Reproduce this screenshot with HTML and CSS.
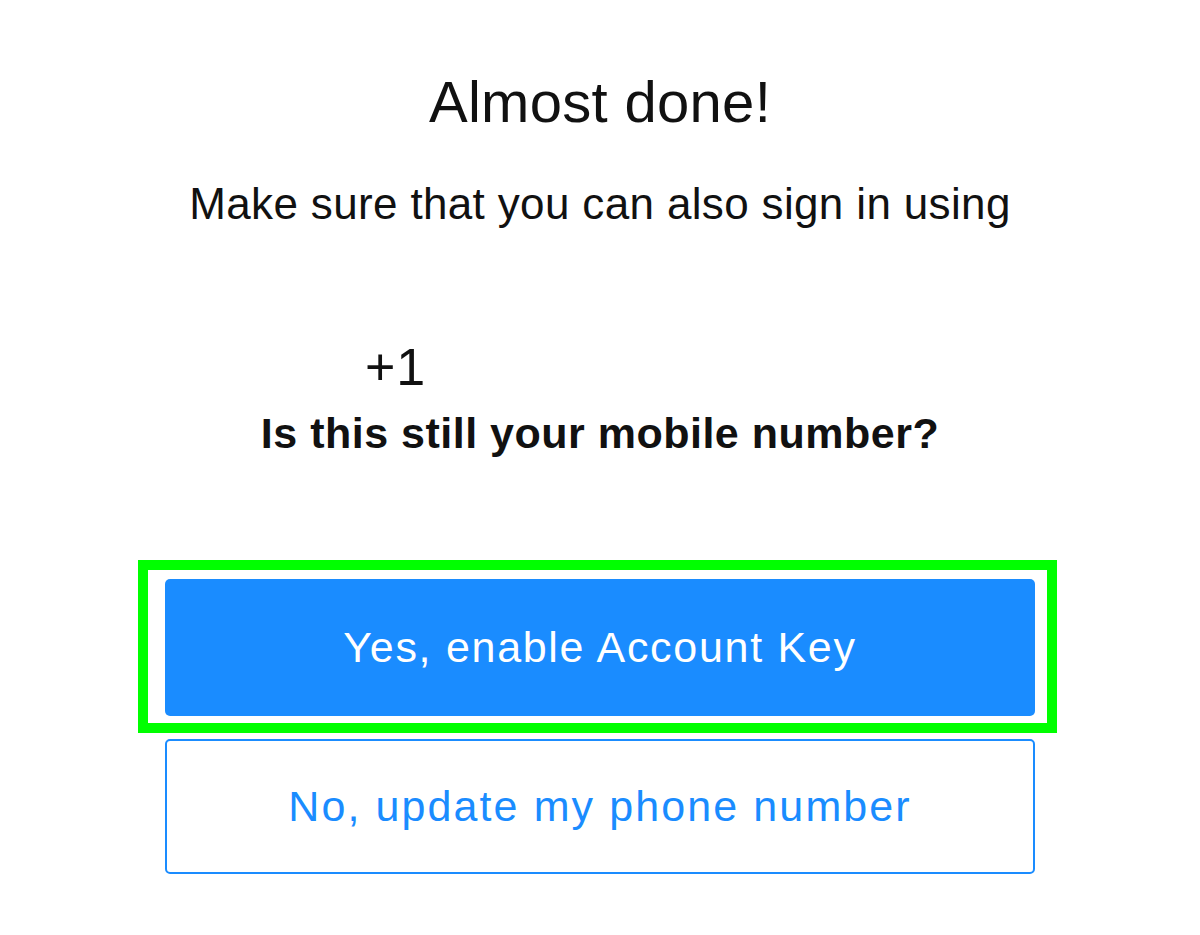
FILE: index.html
```html
<!DOCTYPE html>
<html lang="en">
<head>
<meta charset="utf-8">
<title>Almost done!</title>
<link rel="stylesheet" href="styles.css">
</head>
<body>
<main class="page">
  <h1 class="title">Almost done!</h1>
  <p class="lead">Make sure that you can also sign in using</p>
  <div class="phone">+1</div>
  <p class="question">Is this still your mobile number?</p>
  <div class="actions">
    <div class="highlight-wrap">
      <button class="btn btn-primary" type="button">Yes, enable Account Key</button>
      <span class="highlight" aria-hidden="true"></span>
    </div>
    <button class="btn btn-secondary" type="button">No, update my phone number</button>
  </div>
</main>
</body>
</html>
```

FILE: styles.css
```css
html, body {
  margin: 0;
  padding: 0;
  background: #ffffff;
}

body {
  font-family: "Liberation Sans", Arial, Helvetica, sans-serif;
  color: #111111;
}

.page {
  width: 870px;
  margin: 0 auto;
  padding-top: 67px;
  display: flex;
  flex-direction: column;
}

.title {
  margin: 0;
  font-size: 58px;
  line-height: 70px;
  font-weight: 400;
  text-align: center;
  letter-spacing: 0.3px;
}

.lead {
  margin: 40px 0 0;
  font-size: 44px;
  line-height: 54px;
  text-align: center;
  letter-spacing: 0.35px;
}

.phone {
  margin: 105px 0 0 200px;
  font-size: 52px;
  line-height: 62px;
  letter-spacing: 1px;
}

.question {
  margin: 9px 0 0;
  font-size: 43px;
  line-height: 52px;
  font-weight: 700;
  text-align: center;
  letter-spacing: 0.5px;
}

.actions {
  margin-top: 120px;
  display: flex;
  flex-direction: column;
  gap: 23px;
}

.highlight-wrap {
  position: relative;
}

.btn {
  display: flex;
  align-items: center;
  justify-content: center;
  width: 100%;
  box-sizing: border-box;
  font-family: "Liberation Sans", Arial, Helvetica, sans-serif;
  font-size: 43px;
  border-radius: 5px;
  cursor: pointer;
  padding: 0;
}

.btn-primary {
  height: 137px;
  background: #1a8cff;
  color: #ffffff;
  border: none;
  letter-spacing: 1.7px;
}

.btn-secondary {
  height: 135px;
  background: #ffffff;
  color: #1a8cff;
  border: 2px solid #1a8cff;
  letter-spacing: 2.1px;
}

.highlight {
  position: absolute;
  left: -27px;
  right: -22px;
  top: -19px;
  bottom: -17px;
  border: 10px solid #00ff00;
  pointer-events: none;
}
```
